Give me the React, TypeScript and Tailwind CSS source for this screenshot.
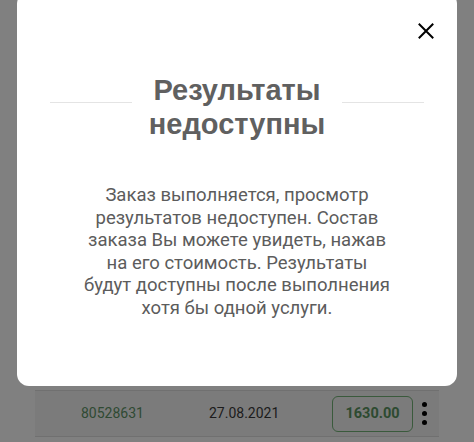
import React from 'react';

export default function App() {
  return (
    <div className="w-[474px] h-[442px] overflow-hidden bg-[#808080] flex flex-col items-center" style={{ fontFamily: 'Roboto, "Liberation Sans", sans-serif' }}>
      {/* Modal */}
      <div className="-mt-[8px] w-[440px] h-[394px] bg-white rounded-[12px] flex flex-col shrink-0">
        <div className="flex justify-end pt-[31px] pr-[23px]">
          <button className="w-[16px] h-[16px] text-black">
            <svg viewBox="0 0 16 16" width="16" height="16" fill="none" stroke="currentColor" strokeWidth="2" strokeLinecap="square">
              <path d="M1.5 1.5L14.5 14.5M14.5 1.5L1.5 14.5" />
            </svg>
          </button>
        </div>

        <div className="flex items-start px-[33px] mt-[34px]">
          <div className="flex-1 h-px bg-[#e4e4e4] mt-[29px]" />
          <h2 className="w-[210px] text-center text-[29px] leading-[34px] font-bold text-[#606060]" style={{ fontFamily: '"Liberation Sans", Arial, sans-serif' }}>
            Результаты недоступны
          </h2>
          <div className="flex-1 h-px bg-[#e4e4e4] mt-[29px]" />
        </div>

        <p className="mt-[43px] px-[40px] text-center text-[18.5px] leading-[22.6px] text-[#5c5c5c]">
          Заказ выполняется, просмотр<br />
          результатов недоступен. Состав<br />
          заказа Вы можете увидеть, нажав<br />
          на его стоимость. Результаты<br />
          будут доступны после выполнения<br />
          хотя бы одной услуги.
        </p>
      </div>

      {/* Row behind overlay */}
      <div className="mt-[4px] w-[404px] h-[47px] bg-[#7b7b7b] border-y border-[#707070] flex items-center shrink-0">
        <span className="ml-[46px] w-[62px] text-[14px] text-[#2f4a33]">80528631</span>
        <span className="ml-[66px] text-[14px] text-[#1c1c1c]">27.08.2021</span>
        <div className="ml-auto w-[81px] h-[36px] border border-[#3a5a3c] rounded-[6px] flex items-center justify-center text-[14.5px] font-bold text-[#2d4a30]">
          1630.00
        </div>
        <div className="ml-[9px] mr-[12px] flex flex-col gap-[4px] items-center">
          <span className="w-[5px] h-[5px] rounded-full bg-black" />
          <span className="w-[5px] h-[5px] rounded-full bg-black" />
          <span className="w-[5px] h-[5px] rounded-full bg-black" />
        </div>
      </div>
    </div>
  );
}
